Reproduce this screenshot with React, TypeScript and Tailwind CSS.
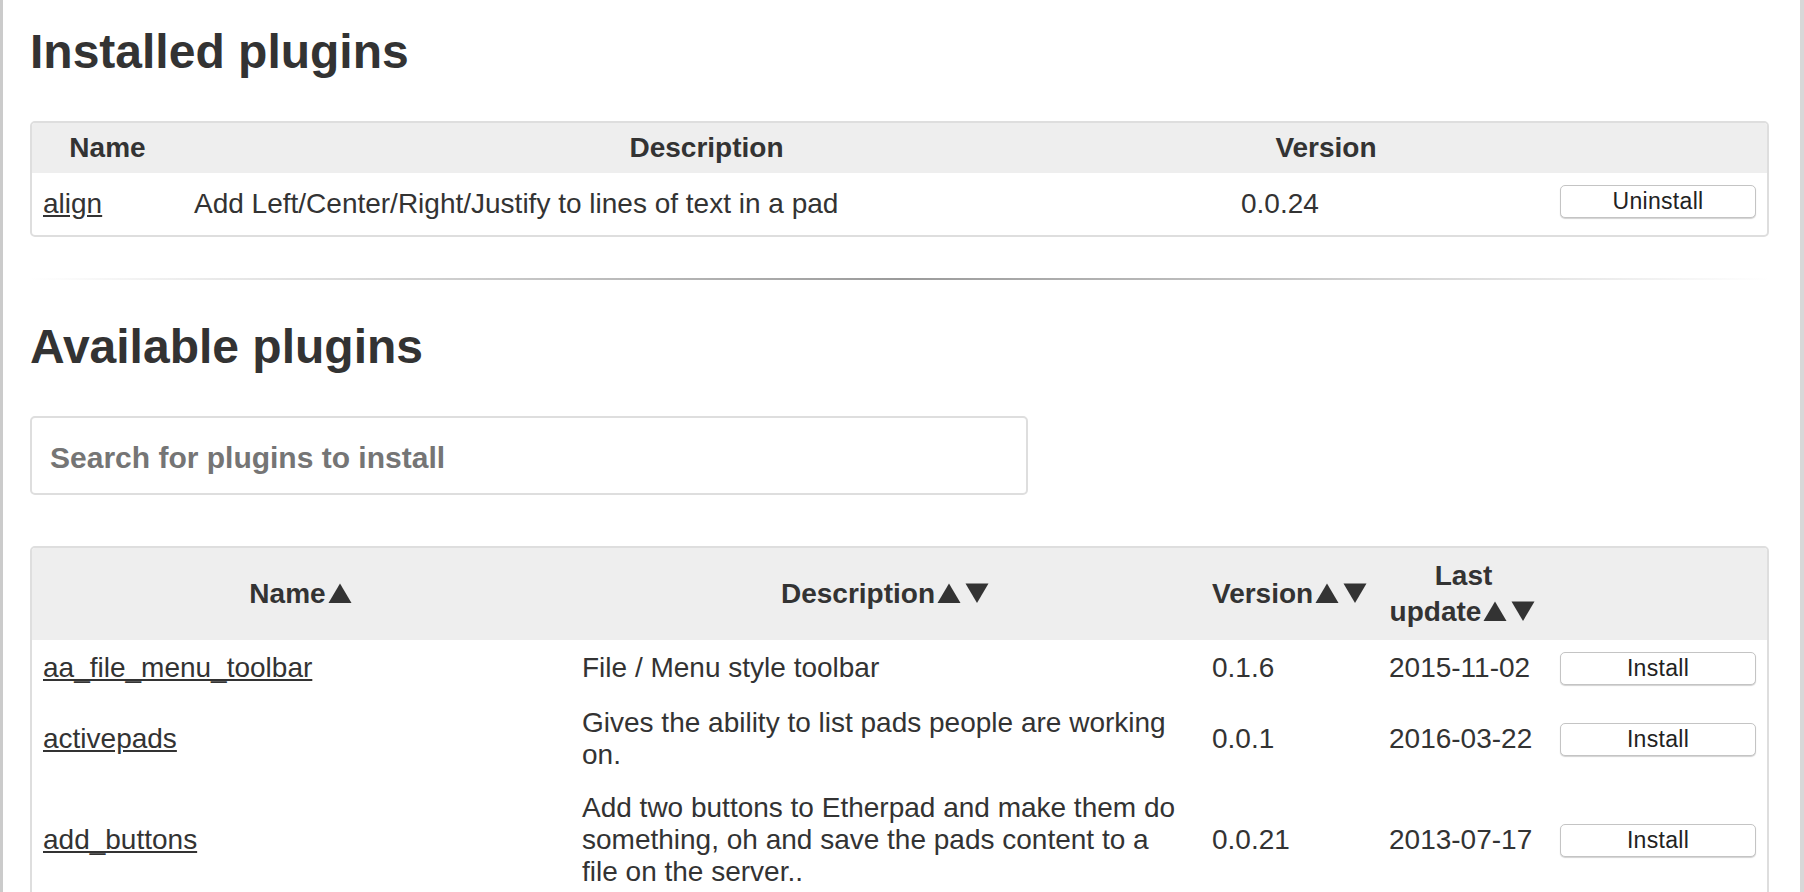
const installed = [
  { name: "align", description: "Add Left/Center/Right/Justify to lines of text in a pad", version: "0.0.24" },
];

const available = [
  { name: "aa_file_menu_toolbar", description: "File / Menu style toolbar", version: "0.1.6", updated: "2015-11-02" },
  { name: "activepads", description: "Gives the ability to list pads people are working on.", version: "0.0.1", updated: "2016-03-22" },
  {
    name: "add_buttons",
    description: "Add two buttons to Etherpad and make them do something, oh and save the pads content to a file on the server..",
    version: "0.0.21",
    updated: "2013-07-17",
  },
];

function Up() {
  return (
    <svg width="28" height="20" viewBox="0 0 28 20" className="inline align-baseline">
      <polygon points="2.5,20 14,0.5 25.5,20" fill="#333" />
    </svg>
  );
}

function Down() {
  return (
    <svg width="28" height="20" viewBox="0 0 28 20" className="inline align-baseline">
      <polygon points="2.5,0.5 25.5,0.5 14,20" fill="#333" />
    </svg>
  );
}

function PlainButton({ label }: { label: string }) {
  return (
    <button className="h-[33px] w-[196px] rounded-[5px] border border-[#c4c4c4] bg-white text-[23px] leading-none tracking-[0.3px] text-[#222] shadow-[0_1px_1px_rgba(0,0,0,0.18)]">
      {label}
    </button>
  );
}

export default function App() {
  return (
    <div className="flex h-[892px] overflow-hidden bg-white font-['Liberation_Sans',Arial,sans-serif] text-[#333]">
      <div className="w-[3px] flex-none bg-[#cbcbcb]" />

      <main className="ml-[27px] w-[1739px] flex-none pt-[24px]">
        <h1 className="text-[48px] font-bold leading-[55px]">Installed plugins</h1>

        <div className="mt-[42px] overflow-hidden rounded-[5px] border-2 border-[#dedede]">
          <table className="w-full table-fixed border-collapse text-[28px] leading-[32px]">
            <colgroup>
              <col className="w-[151px]" />
              <col className="w-[1047px]" />
              <col className="w-[192px]" />
              <col className="w-[345px]" />
            </colgroup>
            <thead className="bg-[#eeeeee]">
              <tr>
                <th className="px-[11px] py-[9px] font-bold">Name</th>
                <th className="px-[11px] py-[9px] font-bold">Description</th>
                <th className="px-[11px] py-[9px] font-bold">Version</th>
                <th className="px-[11px] py-[9px]" />
              </tr>
            </thead>
            <tbody>
              {installed.map((p) => (
                <tr key={p.name}>
                  <td className="h-[62px] px-[11px] text-left align-middle">
                    <a href="#" className="underline">{p.name}</a>
                  </td>
                  <td className="px-[11px] text-left align-middle">{p.description}</td>
                  <td className="px-[11px] text-left align-middle">{p.version}</td>
                  <td className="px-[11px] pt-[11px] text-right align-top">
                    <PlainButton label="Uninstall" />
                  </td>
                </tr>
              ))}
            </tbody>
          </table>
        </div>

        <hr className="mt-[41px] h-[2px] border-0 bg-linear-to-r from-transparent via-[#9a9a9a] to-transparent" />

        <h2 className="mt-[39px] text-[48px] font-bold leading-[55px]">Available plugins</h2>

        <input
          type="text"
          placeholder="Search for plugins to install"
          className="mt-[42px] block h-[79px] w-[998px] rounded-[5px] border-2 border-[#dedede] px-[18px] pt-[4px] text-[30px] font-bold text-[#333] outline-none placeholder:text-[#757575]"
        />

        <div className="mt-[51px] overflow-hidden rounded-[5px] border-2 border-[#dedede]">
          <table className="w-full table-fixed border-collapse text-[28px] leading-[31.7px]">
            <colgroup>
              <col className="w-[539px]" />
              <col className="w-[630px]" />
              <col className="w-[177px]" />
              <col className="w-[171px]" />
              <col className="w-[218px]" />
            </colgroup>
            <thead className="bg-[#eeeeee]">
              <tr>
                <th className="h-[92px] px-[11px] align-middle font-bold leading-[32px]">
                  Name<Up />
                </th>
                <th className="px-[11px] align-middle font-bold leading-[32px]">
                  Description<Up /><Down />
                </th>
                <th className="px-[11px] align-middle font-bold leading-[32px]">
                  <span className="whitespace-nowrap">Version<Up /><Down /></span>
                </th>
                <th className="px-[11px] align-middle font-bold leading-[36px]">
                  Last
                  <br />
                  <span className="whitespace-nowrap">update<Up /><Down /></span>
                </th>
                <th className="px-[11px]" />
              </tr>
            </thead>
            <tbody>
              {available.map((p) => (
                <tr key={p.name}>
                  <td className="px-[11px] py-[11px] text-left align-middle">
                    <a href="#" className="underline">{p.name}</a>
                  </td>
                  <td className="py-[11px] pl-[11px] pr-[14px] text-left align-middle">{p.description}</td>
                  <td className="px-[11px] py-[11px] text-left align-middle">{p.version}</td>
                  <td className="px-[11px] py-[11px] text-left align-middle">{p.updated}</td>
                  <td className="px-[11px] py-[11px] text-left align-middle">
                    <PlainButton label="Install" />
                  </td>
                </tr>
              ))}
            </tbody>
          </table>
        </div>
      </main>

      <div className="flex-1" />
      <div className="w-[4px] flex-none bg-[#d8d8d8]" />
    </div>
  );
}
